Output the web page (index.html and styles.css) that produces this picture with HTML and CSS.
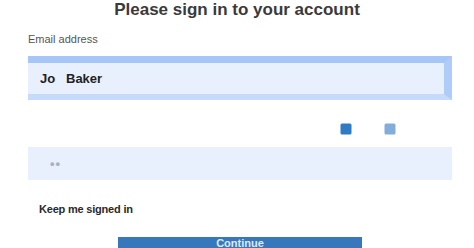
FILE: index.html
```html
<!DOCTYPE html>
<html lang="en">
<head>
<meta charset="utf-8">
<title>Sign in</title>
<link rel="stylesheet" href="styles.css">
</head>
<body>
<main class="page">
  <h1 class="title">Please sign in to your account</h1>
  <form class="form">
    <label class="label" for="email">Email address</label>
    <div class="input input-focus">
      <input id="email" class="input-field" type="text" value="Jo   Baker">
    </div>
    <div class="tools">
      <svg class="tool" viewBox="0 0 12 12" width="12" height="12" aria-hidden="true"><rect x="0.5" y="0.5" width="11" height="11" rx="1.5" fill="#2f7bc4"/></svg>
      <svg class="tool" viewBox="0 0 12 12" width="12" height="12" aria-hidden="true"><rect x="0.5" y="0.5" width="11" height="11" rx="1.5" fill="#82acd9"/></svg>
    </div>
    <div class="input">
      <input class="input-field placeholder" type="password" placeholder="••">
    </div>
    <div class="check">Keep me signed in</div>
    <div class="actions">
      <button class="button" type="button">Continue</button>
    </div>
  </form>
</main>
</body>
</html>
```

FILE: styles.css
```css
html, body {
  margin: 0;
  padding: 0;
  background: #ffffff;
}
body {
  font-family: "Liberation Sans", Arial, sans-serif;
  color: #333333;
}
.page {
  display: flex;
  flex-direction: column;
}
.title {
  margin: 0;
  font-size: 17px;
  font-weight: 700;
  line-height: 20px;
  text-align: center;
  color: #3a3a3a;
}
.form {
  display: flex;
  flex-direction: column;
  padding: 0 22px 0 28px;
}
.label {
  margin-top: 12px;
  font-size: 11px;
  line-height: 14px;
  color: #555555;
}
.input {
  box-sizing: border-box;
  height: 33px;
  background: #e8f0fe;
  display: flex;
  align-items: center;
}
.input-focus {
  margin-top: 10px;
  height: 44px;
  border-top: 7px solid #a6c6f8;
  border-right: 8px solid #afcbf8;
  border-bottom: 6px solid #c6dafb;
}
.input-field {
  border: 0;
  outline: 0;
  background: transparent;
  font-family: "Liberation Sans", Arial, sans-serif;
  font-size: 13px;
  font-weight: 700;
  color: #222222;
  padding: 0 0 0 12px;
  width: 100%;
}
.placeholder {
  padding-left: 22px;
}
.placeholder::placeholder {
  color: #a9b0be;
  letter-spacing: 1px;
}
.tools {
  display: flex;
  gap: 32px;
  justify-content: flex-end;
  padding: 23px 56px 12px 0;
}
.tool {
  display: block;
}
.check {
  margin-top: 22px;
  padding-left: 11px;
  font-size: 11px;
  font-weight: 700;
  line-height: 14px;
  letter-spacing: -0.2px;
  color: #2a2a2a;
}
.actions {
  display: flex;
  justify-content: flex-start;
  padding-left: 90px;
  margin-top: 21px;
}
.button {
  width: 244px;
  height: 13px;
  padding: 0;
  border: 0;
  background: #3778bc;
  color: #dfe9f5;
  font-family: "Liberation Sans", Arial, sans-serif;
  font-size: 11px;
  line-height: 13px;
  font-weight: 700;
}
```
